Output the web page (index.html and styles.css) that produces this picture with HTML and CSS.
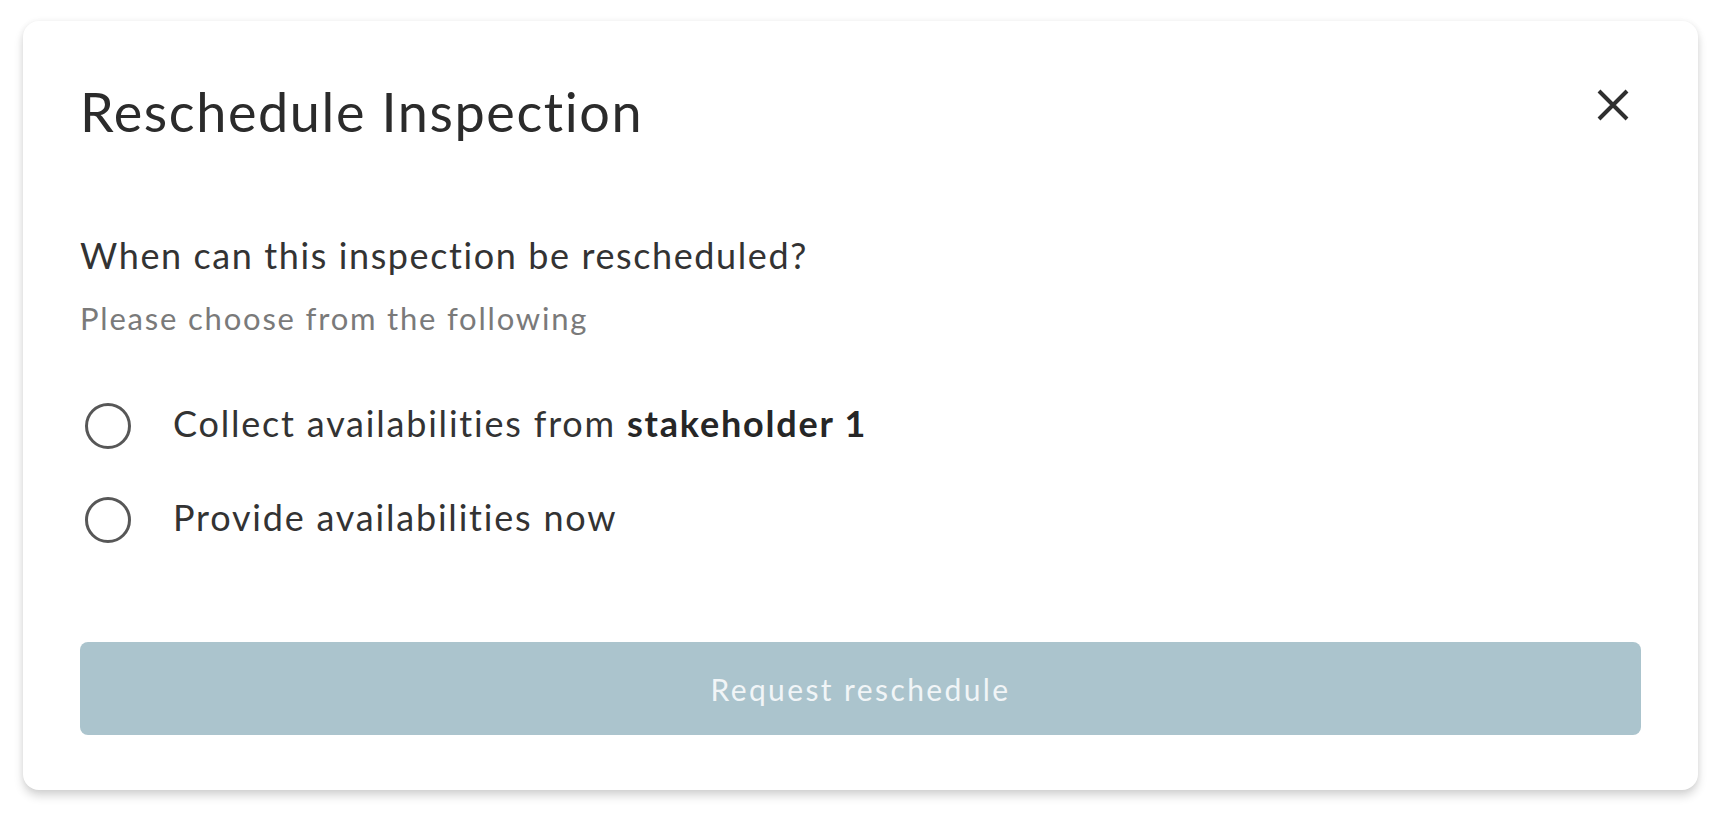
FILE: index.html
```html
<!DOCTYPE html>
<html lang="en">
<head>
<meta charset="utf-8">
<title>Reschedule Inspection</title>
<link rel="stylesheet" href="styles.css">
</head>
<body>
<div class="dialog">
  <div class="dialog-header">
    <h1 class="dialog-title">Reschedule Inspection</h1>
    <button class="close-btn" aria-label="Close">
      <svg viewBox="0 0 40 40" width="40" height="40">
        <path d="M6 6 L34 34 M34 6 L6 34" stroke="#2f2f2f" stroke-width="4" stroke-linecap="butt" fill="none"/>
      </svg>
    </button>
  </div>
  <p class="question">When can this inspection be rescheduled?</p>
  <p class="hint">Please choose from the following</p>
  <div class="options">
    <label class="option">
      <span class="radio"></span>
      <span class="option-text">Collect availabilities from <strong>stakeholder 1</strong></span>
    </label>
    <label class="option">
      <span class="radio"></span>
      <span class="option-text">Provide availabilities now</span>
    </label>
  </div>
  <button class="submit-btn" disabled>Request reschedule</button>
</div>
</body>
</html>
```

FILE: styles.css
```css
html, body {
  margin: 0;
  padding: 0;
  background: #ffffff;
}

body {
  padding: 21px 22px 27px 23px;
  font-family: "Lato", "Open Sans", "Noto Sans", sans-serif;
  font-variant-ligatures: none;
  color: #2f2f2f;
}

.dialog {
  box-sizing: border-box;
  width: 1675px;
  background: #ffffff;
  border-radius: 16px;
  padding: 58px 57px 55px 57px;
  box-shadow: 0 6px 10px rgba(0, 0, 0, 0.16), 0 0 6px rgba(0, 0, 0, 0.06);
  display: flex;
  flex-direction: column;
}

.dialog-header {
  display: flex;
  justify-content: space-between;
  align-items: flex-start;
}

.dialog-title {
  margin: 0;
  font-size: 54px;
  line-height: 66px;
  font-weight: 400;
  letter-spacing: 1.6px;
  color: #2b2b2b;
}

.close-btn {
  margin: 6px 8px 0 0;
  padding: 0;
  width: 40px;
  height: 40px;
  border: none;
  background: none;
  display: flex;
}

.question {
  margin: 87px 0 0 0;
  font-size: 36px;
  line-height: 47px;
  letter-spacing: 1.6px;
  color: #333333;
}

.hint {
  margin: 19px 0 0 0;
  font-size: 31px;
  line-height: 40px;
  letter-spacing: 1.8px;
  color: #7a7a7a;
}

.options {
  margin-top: 65px;
  display: flex;
  flex-direction: column;
  gap: 48px;
}

.option {
  display: flex;
  align-items: flex-start;
  height: 46px;
}

.radio {
  box-sizing: border-box;
  width: 46px;
  height: 46px;
  margin-left: 5px;
  border: 3.5px solid #575757;
  border-radius: 50%;
  flex: none;
}

.option-text {
  margin-left: 42px;
  font-size: 36px;
  line-height: 40px;
  padding-bottom: 6px;
  letter-spacing: 1.8px;
  color: #333333;
  white-space: nowrap;
}

.option-text strong {
  font-weight: 700;
  color: #262626;
}

.submit-btn {
  margin-top: 99px;
  height: 93px;
  width: 100%;
  border: none;
  border-radius: 8px;
  background: #abc4cd;
  color: #f1f5f7;
  font-family: "Lato", "Open Sans", "Noto Sans", sans-serif;
  font-size: 30px;
  letter-spacing: 2.4px;
  padding: 0;
}
```
